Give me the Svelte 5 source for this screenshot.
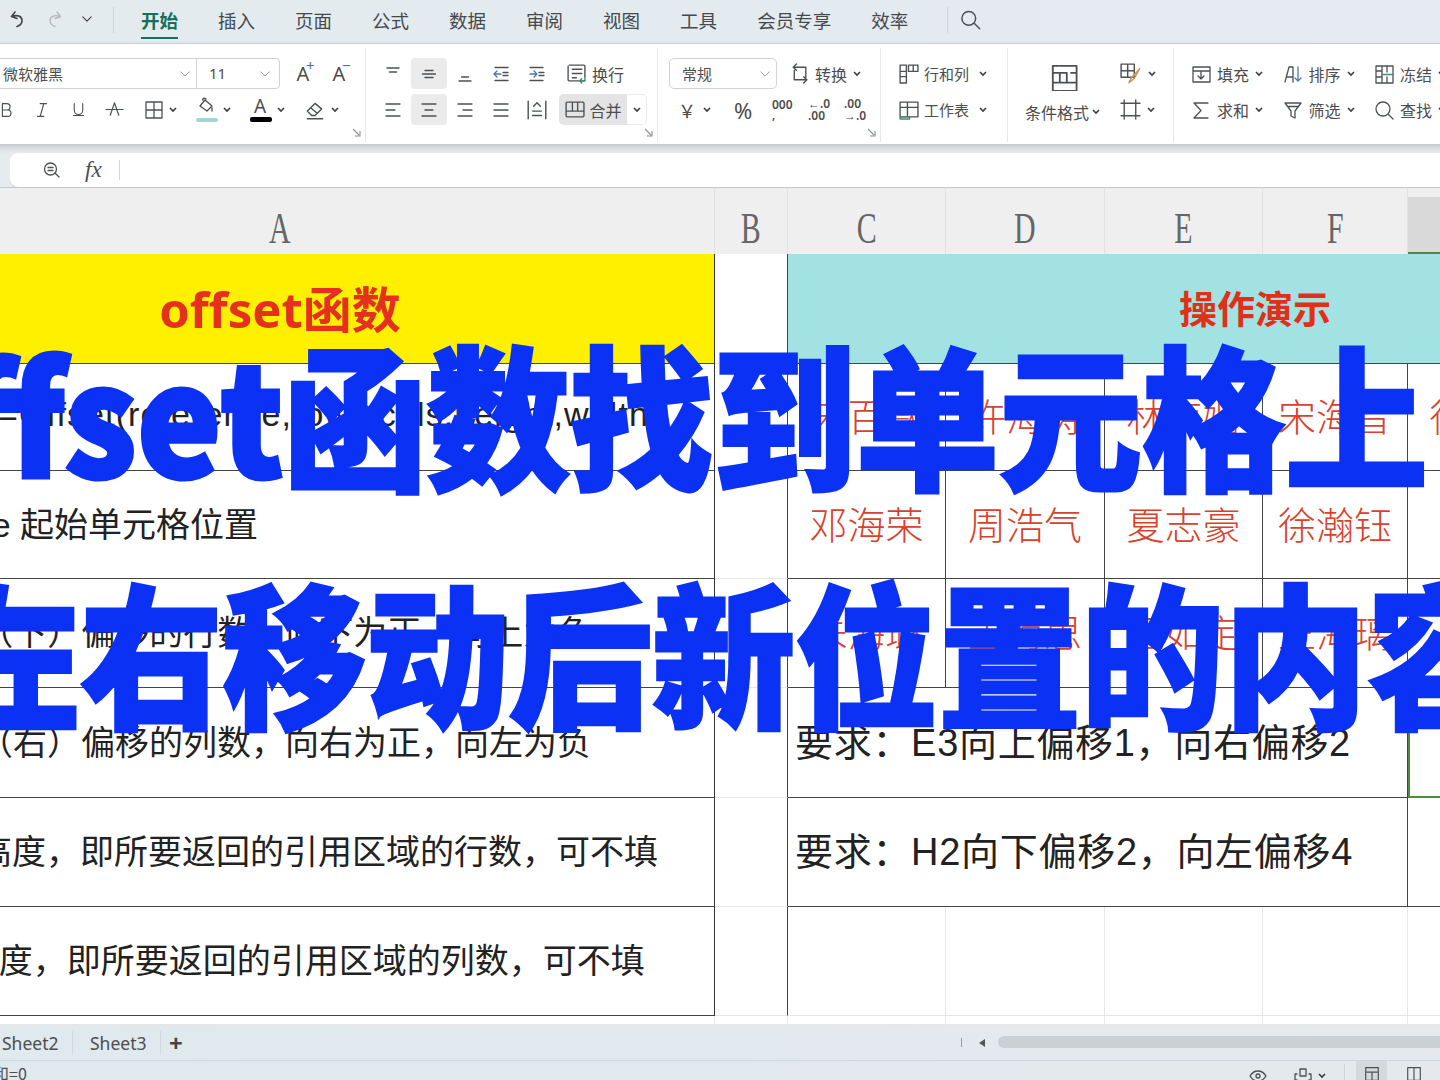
<script>
  const tabs = ['插入','页面','公式','数据','审阅','视图','工具','会员专享','效率'];
  const letters = ['A','B','C','D','E','F','G','H'];
  const aRows = [
    { shift: 152, text: '=Offset(reference,rows,cols,height,width)', wide: true },
    { shift: 21, text: 'reference 起始单元格位置' },
    { shift: 18, text: 'rows 行（下）偏移的行数，向下为正，向上为负' },
    { shift: 29, text: 'cols 列（右）偏移的列数，向右为正，向左为负' },
    { shift: 30, text: 'height 高度，即所要返回的引用区域的行数，可不填' },
    { shift: 30, text: 'width 宽度，即所要返回的引用区域的列数，可不填' }
  ];
  const names = [
    ['宋百薇','许海涛','林海姗','宋海音','徐海宁',''],
    ['邓海荣','周浩气','夏志豪','徐瀚钰','',''],
    ['朱海璐','王海思','王如定','王海璃','','']
  ];
  const I = {
    undo: 'M7 3 3.5 7.5 9 9.5M4 7.5c5-2 10-.5 10 4 0 3-2 5-5 6',
    redo: 'M13 3l3.5 4.5-5.5 2M16 7.5c-5-2-10-.5-10 4 0 3 2 5 5 6',
    chev: 'M4 7l6 6 6-6',
    search: 'M8.5 3a6 6 0 1 0 0 12 6 6 0 0 0 0-12zM13 13l5 5',
    fz: 'M8.5 3a6 6 0 1 0 0 12 6 6 0 0 0 0-12zM13 13l4 4M6 7.5h5M6 10.5h5',
    top: 'M4 4h12M6.5 8h7',
    mid: 'M6 6.5h8M3.5 10h13M6 13.5h8',
    bot: 'M6.5 13h7M4 17h12',
    odent: 'M4 3.5h13M4 16.5h13M12 8.5h5M12 11.5h5',
    odentB: 'M10 10H3M6 7l-3 3 3 3',
    idnt: 'M3 3.5h13M3 16.5h13M12 8.5h5M12 11.5h5',
    idntB: 'M3 10h7M7 7l3 3-3 3',
    left: 'M3 4h14M3 10h9M3 16h14',
    center: 'M3 4h14M6 10h8M3 16h14',
    right: 'M3 4h14M8 10h9M3 16h14',
    just: 'M3 4h14M3 10h14M3 16h14',
    dist: 'M2 2v16M18 2v16M6 11h8M6 15h8M7 6.5l3-3 3 3',
    wrap: 'M3 2h14a1 1 0 0 1 1 1v10M18 17H3a1 1 0 0 1-1-1V3M6 6h9M6 10h9M6 14h4',
    wrapB: 'M18 12v5h-5M15 15l-2 2 2 2',
    merge: 'M3 3h15a1 1 0 0 1 1 1v12a1 1 0 0 1-1 1H3a1 1 0 0 1-1-1V4a1 1 0 0 1 1-1zM2 11.5h17M8 3v8.5M13 3v8.5',
    convert: 'M7 1 4 4l3 3M4 4h12v10M14 19l3-3-3-3M17 16H5V7',
    rowcol: 'M2 2h6v17H2zM2 8h6M2 13h6M10 2h9v6h-9zM14.5 2v6',
    sheet: 'M2 3h17v14H2zM2 8h17M9 3v14',
    sheetB: 'M2 17h9v2H2z',
    cond: 'M6 2H2v18h4M15 2h4v18h-4M7 2h8M7 20h8M2 7h4M2 14h4M15 7h4M15 14h4M7 7h5v7H7zM12 14h3',
    style: 'M1 1h12v12H1zM1 7h12M7 1v12',
    styleB: 'M8 18l2-4 8-9-5 9zM8 18l4-3',
    cell: 'M4 1v18M15 1v18M1 4h18M1 16h18',
    fill: 'M2 3h17v15H2zM2 7h17M10 8v7M7 12l3 3 3-3',
    sort: 'M2 18 6 3h4v15M3.5 13h6.5',
    sortB: 'M15 3v14M12 14l3 3 3-3',
    freeze: 'M2 2h17v17H2zM2 7h6M8 2v17M2 13h6M13 2v6M13 13v6',
    freezeB: 'M8 10.5h11',
    sum: 'M17 3H3l7 7.5-7 7.5h14',
    filter: 'M2 3h16l-6 8v7l-4-2v-5zM5 6.5h10',
    find: 'M9 2a7 7 0 1 0 0 14 7 7 0 0 0 0-14zM14 14l5 5',
    bold: 'M6 3v14M6 3h5a3.5 3.5 0 0 1 0 7H6h6a3.5 3.5 0 0 1 0 7H6',
    ital: 'M8 3h7M5 17h7M12 3 8 17',
    und: 'M5 3v8a5 5 0 0 0 10 0V3M4 17h12',
    strike: 'M5.5 16 10 3l4.5 13M1 10h18',
    border: 'M2 2h16v16H2zM2 10h16M10 2v16',
    eraser: 'M3 11l7-7 6 5-6 6H7zM6 8l6 5M3 18h14',
    bucket: 'M4 9l5-6 7 6-5 5zM7 3c-1-1 1-3 3-1M16 11v3',
    eye: 'M2 10s3-5 8-5 8 5 8 5-3 5-8 5-8-5-8-5zM10 8a2 2 0 1 0 0 4 2 2 0 0 0 0-4z',
    focus: 'M7 3h6v7H7zM4 8H2v6h2M16 8h2v6h-2',
    gridv: 'M3 3h14v14H3zM3 8h14M10 8v9',
    page: 'M3 3h14v14H3zM10 3v14'
  };
</script>

{#snippet ic(d, size = 20, cls = '', d2 = '', cls2 = '')}
  <svg class="ic {cls}" width={size} height={size} viewBox="0 0 20 20" fill="none"><path {d} />{#if d2}<path class={cls2} d={d2} />{/if}</svg>
{/snippet}
{#snippet caret()}
  <svg class="caret" width="8" height="6" viewBox="0 0 8 6" fill="none"><path d="M1 1l3 3 3-3" /></svg>
{/snippet}
{#snippet launcher()}
  <svg class="launch" width="9" height="9" viewBox="0 0 9 9" fill="none"><path d="M1 1l6 6M8 3v5H3" /></svg>
{/snippet}

<div class="page">
  <header class="topbar">
    <div class="qa">
      {@render ic(I.undo, 20, 'dark')}
      {@render ic(I.redo, 20, 'faint')}
      {@render ic(I.chev, 14, 'dark')}
    </div>
    <span class="sep"></span>
    <nav class="tabs">
      <span class="tab active">开始</span>
      {#each tabs as t}<span class="tab">{t}</span>{/each}
    </nav>
    <span class="sep"></span>
    {@render ic(I.search, 23, 'srch')}
  </header>

  <section class="ribbon">
    <div class="grp g-font">
      <div class="row">
        <div class="fontsel">
          <span class="fname">微软雅黑</span>{@render ic(I.chev, 14, 'lite')}
          <span class="fsize">11</span>{@render ic(I.chev, 14, 'lite')}
        </div>
        <span class="aa first">A<i>+</i></span>
        <span class="aa">A<i>−</i></span>
      </div>
      <div class="row">
        <span class="b36 lead">{@render ic(I.bold, 18)}</span>
        <span class="b36">{@render ic(I.ital, 18)}</span>
        <span class="b36">{@render ic(I.und, 17)}</span>
        <span class="b36">{@render ic(I.strike, 19)}</span>
        <span class="drop d1">{@render ic(I.border)}{@render caret()}</span>
        <span class="drop"><span class="swatchwrap">{@render ic(I.bucket, 20)}<i class="sw teal"></i></span>{@render caret()}</span>
        <span class="drop"><span class="swatchwrap"><b class="la">A</b><i class="sw blk"></i></span>{@render caret()}</span>
        <span class="drop">{@render ic(I.eraser, 22)}{@render caret()}</span>
      </div>
      {@render launcher()}
    </div>

    <div class="grp g-align">
      <div class="row">
        <span class="b36">{@render ic(I.top)}</span>
        <span class="b36 on">{@render ic(I.mid)}</span>
        <span class="b36">{@render ic(I.bot)}</span>
        <span class="b36">{@render ic(I.odent, 20, '', I.odentB, 'blue')}</span>
        <span class="b36">{@render ic(I.idnt, 20, '', I.idntB, 'blue')}</span>
        <span class="lab wrapb">{@render ic(I.wrap, 21, '', I.wrapB, 'green')}<span>换行</span></span>
      </div>
      <div class="row">
        <span class="b36">{@render ic(I.left)}</span>
        <span class="b36 on">{@render ic(I.center)}</span>
        <span class="b36">{@render ic(I.right)}</span>
        <span class="b36">{@render ic(I.just)}</span>
        <span class="b36">{@render ic(I.dist, 22)}</span>
        <span class="mergeb"><span class="mleft">{@render ic(I.merge, 21)}<span>合并</span></span><span class="mright">{@render caret()}</span></span>
      </div>
      {@render launcher()}
    </div>

    <div class="grp g-num">
      <div class="row">
        <div class="numsel"><span>常规</span>{@render ic(I.chev, 14, 'lite')}</div>
        <span class="lab conv">{@render ic(I.convert, 21)}<span>转换</span>{@render caret()}</span>
      </div>
      <div class="row numrow">
        <span class="yen">￥</span>{@render caret()}
        <span class="pct">%</span>
        <span class="dec thou">000<br />,</span>
        <span class="dec"><b>←</b>.0<br />.00</span>
        <span class="dec">.00<br /><b>→</b>.0</span>
      </div>
      {@render launcher()}
    </div>

    <div class="grp g-rc">
      <div class="row"><span class="lab rc">{@render ic(I.rowcol, 21)}<span>行和列</span>{@render caret()}</span></div>
      <div class="row"><span class="lab rc">{@render ic(I.sheet, 21, '', I.sheetB, 'green')}<span>工作表</span>{@render caret()}</span></div>
    </div>

    <div class="grp g-cond">
      <div class="condbig">
        {@render ic(I.cond, 28)}
        <span class="condlab">条件格式{@render caret()}</span>
      </div>
      <div class="condside">
        <div class="row">{@render ic(I.style, 22, '', I.styleB, 'tanb')}{@render caret()}</div>
        <div class="row">{@render ic(I.cell, 21)}{@render caret()}</div>
      </div>
    </div>

    <div class="grp g-edit">
      <div class="row">
        <span class="lab e">{@render ic(I.fill)}<span>填充</span>{@render caret()}</span>
        <span class="lab e">{@render ic(I.sort, 20, '', I.sortB, 'blue')}<span>排序</span>{@render caret()}</span>
        <span class="lab e">{@render ic(I.freeze, 20, '', I.freezeB, 'green')}<span>冻结</span>{@render caret()}</span>
      </div>
      <div class="row">
        <span class="lab e">{@render ic(I.sum)}<span>求和</span>{@render caret()}</span>
        <span class="lab e">{@render ic(I.filter)}<span>筛选</span>{@render caret()}</span>
        <span class="lab e">{@render ic(I.find)}<span>查找</span>{@render caret()}</span>
      </div>
    </div>
  </section>

  <div class="fbar">
    <div class="fbox">
      {@render ic(I.fz, 20)}
      <span class="fx">fx</span>
      <span class="fdiv"></span>
    </div>
  </div>

  <main class="sheet">
    {#each letters as l}
      <div class="hd" class:sel={l === 'G'}>{#if l !== 'G' && l !== 'H'}<span>{l}</span>{/if}</div>
    {/each}

    <div class="c a ttl yellow"><span>offset函数</span></div>
    <div class="c bcol"></div>
    <div class="c k teal-bg span6 ttl2"><span>操作演示</span></div>

    {#each names as row, r}
      <div class="c a txt"><span class:wide={aRows[r].wide} style:margin-left="{aRows[r].shift}px">{aRows[r].text}</span></div>
      <div class="c bcol"></div>
      {#each row as n}<div class="c k nm">{n}</div>{/each}
    {/each}

    <div class="c a txt"><span style:margin-left="{aRows[3].shift}px">{aRows[3].text}</span></div>
    <div class="c bcol"></div>
    <div class="c k span4 req">要求：E3向上偏移1，向右偏移2</div>
    <div class="c k picked"></div>
    <div class="c k"></div>

    <div class="c a txt"><span style:margin-left="{aRows[4].shift}px">{aRows[4].text}</span></div>
    <div class="c bcol"></div>
    <div class="c k span4 req">要求：H2向下偏移2，向左偏移4</div>
    <div class="c k"></div>
    <div class="c k"></div>

    <div class="c a txt"><span style:margin-left="{aRows[5].shift}px">{aRows[5].text}</span></div>
    <div class="c bcol"></div>
    {#each [1,2,3,4,5,6] as _}<div class="c"></div>{/each}

    {#each letters as _}<div class="c"></div>{/each}
  </main>

  <footer class="tabsbar">
    <span class="st">Sheet2</span>
    <span class="st">Sheet3</span>
    <span class="plus">+</span>
    <span class="spacer"></span>
    <span class="tick"></span>
    <span class="tri"></span>
    <span class="thumb"></span>
  </footer>
  <footer class="status">
    <span class="sumtxt">求和=0</span>
    <span class="spacer"></span>
    {@render ic(I.eye, 20)}
    <span class="focus">{@render ic(I.focus, 20)}{@render caret()}</span>
    <span class="vsep"></span>
    <span class="vbtn on2">{@render ic(I.gridv, 18)}</span>
    <span class="vbtn">{@render ic(I.page, 18)}</span>
  </footer>

  <div class="overlay l1">Offset函数找到单元格上</div>
  <div class="overlay l2">左右移动后新位置的内容</div>
</div>

<style>
  :global(body) { margin: 0; background: #fff; }
  .page {
    position: relative; width: 1440px; height: 1080px; overflow: hidden;
    display: flex; flex-direction: column;
    font-family: "Noto Sans CJK SC", "Noto Sans", sans-serif; color: #444;
  }
  .ic path { stroke: #4d5154; stroke-width: 1.3; stroke-linejoin: round; stroke-linecap: round; }
  .ic { flex: none; display: block; }
  .ic.dark path { stroke: #3f4346; stroke-width: 1.6; }
  .ic.faint path { stroke: #b4babe; stroke-width: 1.4; }
  .ic.lite path { stroke: #8b9094; }
  .ic path.blue { stroke: #4a78b0; }
  .ic path.green { stroke: #3f8f70; }
  .ic path.tanb { stroke: #c79a58; }
  .caret { flex: none; }
  .caret path { stroke: #3c3c3c; stroke-width: 1.6; }
  .launch { position: absolute; right: 4px; bottom: 5px; }
  .launch path { stroke: #8a8f93; stroke-width: 1.1; }

  .topbar {
    height: 44px; flex: none; display: flex; align-items: center;
    background: linear-gradient(90deg, #e3ebef, #e5ebf0);
    border-bottom: 1px solid #cfd4d7; box-sizing: border-box;
  }
  .qa { display: flex; align-items: center; width: 113px; box-sizing: border-box; padding-left: 8px; gap: 16px; margin-bottom: 5px; }
  .sep { width: 1px; height: 26px; background: #cfd6da; flex: none; margin-bottom: 4px; }
  .tabs { display: flex; gap: 40px; margin-left: 27px; width: 806px; margin-bottom: 4px; }
  .tab { font-size: 18.5px; line-height: 26px; color: #45494d; white-space: nowrap; position: relative; }
  .tab.active { color: #17715a; font-weight: 700; }
  .tab.active::after { content: ''; position: absolute; left: 0; right: 0; bottom: -6px; height: 2px; background: #17715a; }
  .srch { margin-left: 11px; margin-bottom: 5px; }

  .ribbon {
    height: 100px; flex: none; display: flex; background: #fff; margin-left: -20px;
    width: 1480px; position: relative; z-index: 1;
    box-shadow: 0 3px 6px rgba(120, 130, 135, .35);
  }
  .grp {
    position: relative; box-sizing: border-box; flex: none;
    display: flex; flex-direction: column; gap: 5px; height: 94px;
    border-right: 1px solid #e4e6e8; margin-top: 4px;
  }
  .g-font { width: 386px; padding-top: 10px; }
  .g-align { width: 292px; padding: 10px 0 0 9px; }
  .g-num { width: 223px; padding: 10px 0 0 11px; }
  .g-rc { width: 127px; padding: 10px 0 0 17px; }
  .g-cond { width: 166px; padding: 10px 0 0 17px; flex-direction: row; gap: 0; }
  .g-edit { width: 300px; padding: 10px 0 0 17px; border: 0; }
  .row { display: flex; align-items: center; height: 31px; }

  .fontsel {
    display: flex; align-items: center; width: 300px; height: 31px; box-sizing: border-box; flex: none;
    border: 1px solid #cfd3d6; border-radius: 4px;
  }
  .fname { font-size: 15px; width: 197px; padding-left: 22px; box-sizing: border-box; color: #4d4d4d; }
  .fsize { font-size: 15px; width: 62px; padding-left: 12px; margin-left: 4px; box-sizing: border-box; border-left: 1px solid #cfd3d6; line-height: 29px; color: #4d4d4d; font-family: "Noto Sans", sans-serif; }
  .aa { font-family: "Noto Sans", sans-serif; font-size: 20px; width: 36px; color: #4d4d4d; position: relative; text-align: center; }
  .aa.first { margin-left: 5px; }
  .aa i { font-style: normal; position: absolute; top: -5px; left: 21px; font-size: 15px; color: #4f6c9c; }

  .b36 { width: 36px; height: 31px; display: flex; align-items: center; justify-content: center; flex: none; border-radius: 4px; }
  .b36.on { background: #ebebeb; }
  .b36.lead { margin-left: 8px; }
  .drop { display: flex; align-items: center; gap: 5px; flex: none; margin-right: 19px; }
  .d1 { margin-left: 12px; }
  .swatchwrap { position: relative; width: 22px; height: 26px; display: block; }
  .sw { position: absolute; left: 0; right: 0; bottom: 1px; height: 4px; border-radius: 2px; }
  .sw.teal { background: #a3d8d0; }
  .sw.blk { background: #000; height: 5px; }
  .la { position: absolute; left: 4px; top: -4px; font-size: 19px; font-weight: 400; color: #4d4d4d; font-family: "Noto Sans", sans-serif; }

  .lab { display: inline-flex; align-items: center; gap: 5px; font-size: 16px; color: #4d4d4d; white-space: nowrap; flex: none; }
  .wrapb { margin-left: 11px; }
  .rc { font-size: 15px; }
  .rc > .caret { margin-left: 5px; }
  .mergeb { display: flex; margin-left: 4px; height: 31px; width: 88px; border-radius: 5px; overflow: hidden; box-shadow: inset 0 0 0 1px #ebebeb; }
  .mleft { display: flex; align-items: center; gap: 4px; width: 68px; justify-content: center; background: #e4e4e4; font-size: 16px; color: #4d4d4d; }
  .mright { flex: 1; display: flex; align-items: center; justify-content: center; }

  .numsel {
    width: 108px; height: 31px; box-sizing: border-box; border: 1px solid #d0d4d7; border-radius: 5px;
    display: flex; align-items: center; justify-content: space-between; padding: 0 4px 0 12px; font-size: 15px; color: #4d4d4d;
  }
  .conv { margin-left: 12px; }
  .conv > .caret { margin-left: 1px; }
  .yen { font-size: 18px; margin-left: 9px; margin-right: 7px; color: #4d4d4d; }
  .pct { font-family: "Noto Sans", sans-serif; font-size: 22px; margin-left: 23px; width: 39px; color: #4d4d4d; }
  .dec { font-family: "Noto Sans", sans-serif; font-size: 12px; line-height: 12px; color: #4d4d4d; width: 37px; font-weight: 600; }
  .thou { line-height: 10px; }

  .condbig { display: flex; flex-direction: column; align-items: flex-start; width: 95px; padding-top: 5px; gap: 9px; }
  .condbig > .ic { margin-left: 25px; }
  .condlab { font-size: 16px; color: #4d4d4d; white-space: nowrap; display: flex; align-items: center; gap: 3px; }
  .condside { display: flex; flex-direction: column; gap: 5px; }
  .condside .row { gap: 6px; }
  .e { width: 91.5px; gap: 6px; }

  .fbar { height: 43px; flex: none; background: #e6ebee; padding: 9px 0 0 10px; box-sizing: border-box; }
  .fbox {
    height: 34px; background: #fff; border-radius: 8px 0 0 8px; box-shadow: 0 1px 0 #c6c9cb; display: flex; align-items: center;
    padding-left: 32px;
  }
  .fx { font-family: "Liberation Serif", serif; font-style: italic; font-size: 23px; margin-left: 23px; color: #4d4d4d; }
  .fdiv { width: 1px; height: 20px; background: #d4d7d9; margin-left: 17px; }

  .sheet {
    height: 838px; flex: none; margin-left: -154px; width: 1877px;
    display: grid;
    grid-template-columns: 869px 73px 158px 159px 158px 145px 158px 157px;
    grid-template-rows: 67px 110px 107px 108px 109px 110px 109px 109px 9px;
    overflow: hidden;
  }
  .hd {
    background: #efefef; border-right: 1px solid #e2e2e2; box-sizing: border-box;
    border-top: 1px solid #c8c8c8;
    font-family: "Liberation Serif", serif; color: #666; text-align: center; font-size: 44px; line-height: 82px;
  }
  .hd span { display: inline-block; transform: scaleX(.68); }
  .hd.sel { background: linear-gradient(#efefef 9px, #d9d9d9 9px); border-bottom: 2px solid #4c8a3f; }
  .c { box-sizing: border-box; border-right: 1px solid #e6e6e6; border-bottom: 1px solid #e6e6e6; min-width: 0; }
  .a { border-right: 1px solid #333; border-bottom: 1px solid #444; }
  .bcol { border-right: 1px solid #444; }
  .k { border-right: 1px solid #444; border-bottom: 1px solid #444; }
  .yellow { background: #fff000; display: flex; align-items: center; justify-content: center; padding-bottom: 5px; }
  .ttl span { color: #e5301e; font-size: 49px; font-weight: 700; font-family: "Noto Sans", "Noto Sans CJK SC", sans-serif; }
  .teal-bg { background: #a3e2e3; display: flex; align-items: center; justify-content: center; padding-bottom: 5px; }
  .span6 { grid-column: span 6; }
  .span4 { grid-column: span 4; }
  .ttl2 span { color: #e0301a; font-size: 38px; font-weight: 700; }
  .txt { font-size: 34px; color: #222; display: flex; align-items: center; padding-bottom: 5px; white-space: nowrap; font-family: "Liberation Sans", "Noto Sans CJK SC", sans-serif; }
  .txt .wide { letter-spacing: 1.1px; }
  .nm { font-size: 38px; color: #d8412c; display: flex; align-items: center; justify-content: center; padding-bottom: 5px; font-weight: 300; font-family: "Noto Sans CJK SC", serif; white-space: nowrap; overflow: hidden; }
  .req { font-size: 38px; letter-spacing: .7px; color: #222; display: flex; align-items: center; padding: 0 0 7px 7px; white-space: nowrap; font-family: "Liberation Sans", "Noto Sans CJK SC", sans-serif; }
  .picked { border-left: 2px solid #4c8a3f; border-bottom: 2px solid #4c8a3f; }

  .tabsbar {
    height: 36px; flex: none; display: flex; align-items: center; background: linear-gradient(90deg, #dfe9ee, #e5e9ed);
    border-bottom: 1px solid #cdd6da; box-sizing: border-box; font-family: "Noto Sans", sans-serif; font-size: 17.5px; color: #4d4d4d;
    padding-left: 2px; 
  }
  .st { width: 88px; flex: none; line-height: 30px; position: relative; }
  .st:nth-child(2) { width: 70px; }
  .st::after { content: ''; position: absolute; width: 1px; height: 24px; top: 3px; left: 70px; background: #d0dade; }
  .plus { font-size: 24px; font-weight: 700; color: #444; margin-left: 9px; line-height: 26px; }
  .spacer { flex: 1; }
  .tick { width: 1px; height: 9px; background: #9aa0a3; margin-right: 17px; }
  .tri { width: 0; height: 0; border: 4px solid transparent; border-right: 6px solid #555; border-left: 0; margin-right: 13px; }
  .thumb { width: 442px; height: 12px; background: #cbd0d4; border-radius: 6px 0 0 6px; margin-bottom: 2px; }
  .status {
    height: 20px; flex: none; display: flex; align-items: flex-start; background: linear-gradient(90deg, #dfe9ee, #e5e9ed);
    font-size: 16px; color: #4d4d4d; box-sizing: border-box;
  }
  .status > .ic { margin-top: 5px; }
  .sumtxt { margin-left: -23px; line-height: 24px; white-space: nowrap; }
  .focus { display: flex; align-items: center; gap: 5px; margin: 5px 0 0 25px; }
  .vsep { width: 1px; height: 16px; background: #cfd4d8; margin: 3px 11px 0 18px; }
  .vbtn { width: 31px; height: 20px; display: flex; justify-content: center; padding-top: 4px; box-sizing: border-box; margin-right: 11px; }
  .on2 { background: #d3d9dd; }

  .overlay {
    position: absolute; z-index: 5; white-space: nowrap; color: #0a31f4;
    font-family: "Noto Sans CJK SC", sans-serif; font-weight: 900; font-size: 143px; line-height: 170px;
    -webkit-text-stroke: 3px #0a31f4; pointer-events: none;
    transform: scaleY(1.08); transform-origin: 50% 100%;
  }
  .l1 { top: 333px; right: 12px; }
  .l2 { top: 571px; right: -70px; }
</style>
